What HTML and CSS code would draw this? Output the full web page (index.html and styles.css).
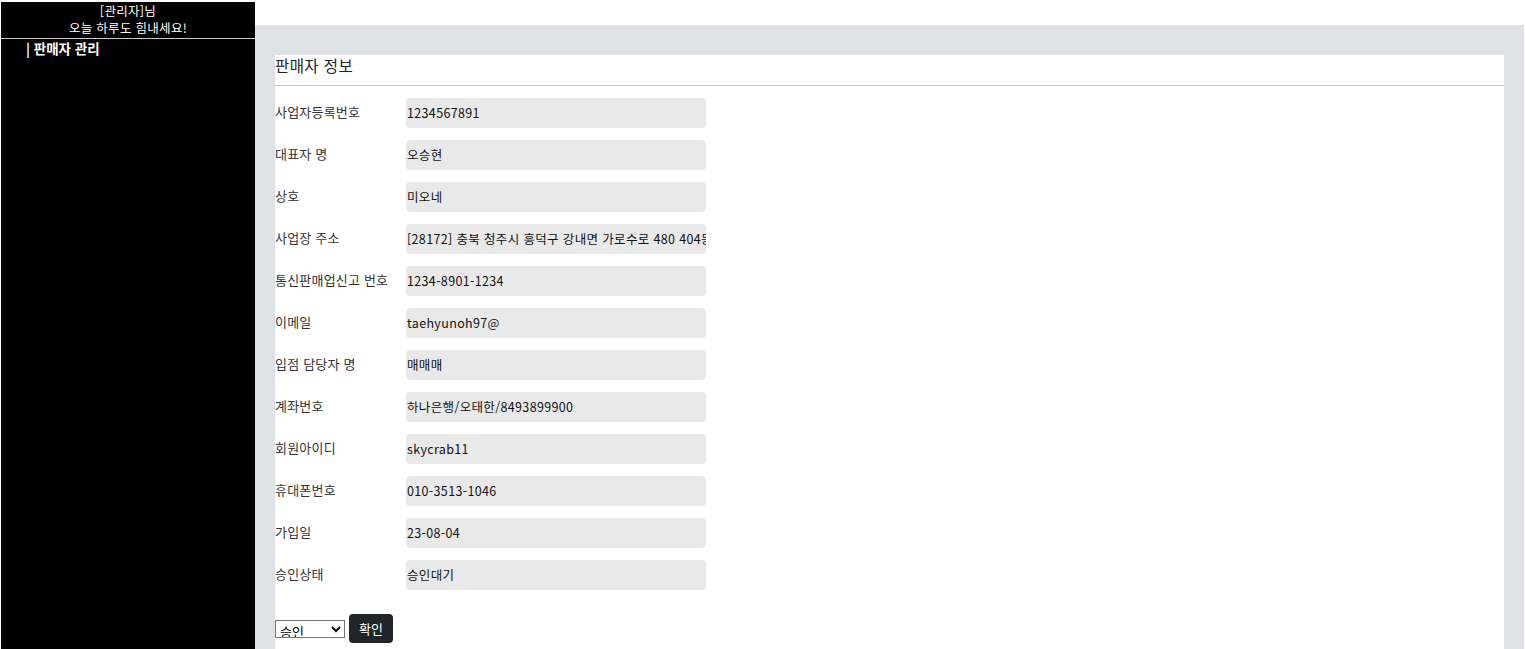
FILE: index.html
```html
<!DOCTYPE html>
<html lang="ko">
<head>
<meta charset="utf-8">
<title>판매자 정보</title>
<link rel="stylesheet" href="styles.css">
</head>
<body>
<div class="layout">
  <aside class="sidebar">
    <div class="profile">
      <div>[관리자]님</div>
      <div>오늘 하루도 힘내세요!</div>
    </div>
    <nav class="menu">
      <div class="menu-item">| 판매자 관리</div>
    </nav>
  </aside>
  <main class="main">
    <div class="topbar"></div>
    <div class="content">
      <section class="card">
        <h2 class="card-title">판매자 정보</h2>
        <div class="form">
          <div class="row"><label>사업자등록번호</label><div class="field">1234567891</div></div>
          <div class="row"><label>대표자 명</label><div class="field">오승현</div></div>
          <div class="row"><label>상호</label><div class="field">미오네</div></div>
          <div class="row"><label>사업장 주소</label><div class="field">[28172] 충북 청주시 흥덕구 강내면 가로수로 480 404동</div></div>
          <div class="row"><label>통신판매업신고 번호</label><div class="field">1234-8901-1234</div></div>
          <div class="row"><label>이메일</label><div class="field">taehyunoh97@</div></div>
          <div class="row"><label>입점 담당자 명</label><div class="field">매매매</div></div>
          <div class="row"><label>계좌번호</label><div class="field">하나은행/오태한/8493899900</div></div>
          <div class="row"><label>회원아이디</label><div class="field">skycrab11</div></div>
          <div class="row"><label>휴대폰번호</label><div class="field">010-3513-1046</div></div>
          <div class="row"><label>가입일</label><div class="field">23-08-04</div></div>
          <div class="row"><label>승인상태</label><div class="field">승인대기</div></div>
          <div class="actions">
            <select class="select"><option>승인</option><option>거절</option></select>
            <button class="btn">확인</button>
          </div>
        </div>
      </section>
    </div>
  </main>
</div>
</body>
</html>
```
FILE: styles.css
```css
html, body {
  margin: 0;
  padding: 0;
  height: 100%;
  background: #fff;
  font-family: "Noto Sans CJK KR", "Noto Sans", sans-serif;
  font-size: 13px;
  color: #222;
}
.layout {
  display: flex;
  min-height: 100vh;
}
.sidebar {
  width: 254px;
  margin: 2px 0 0 1px;
  background: #000;
  color: #fff;
  flex-shrink: 0;
}
.profile {
  text-align: center;
  font-size: 12.5px;
  letter-spacing: 0.3px;
  line-height: 17px;
  padding-bottom: 2px;
  border-bottom: 1px solid #c8c8c8;
}
.menu-item {
  padding-left: 25px;
  font-weight: bold;
  font-size: 13.5px;
  line-height: 19px;
}
.main {
  flex: 1;
  display: flex;
  flex-direction: column;
  margin-right: 1px;
}
.topbar {
  height: 25px;
  background: #fff;
}
.content {
  flex: 1;
  background: #dee2e6;
  padding: 30px 20px 0 20px;
}
.card {
  background: #fff;
  min-height: 620px;
}
.card-title {
  margin: 0;
  font-weight: normal;
  font-size: 15.5px;
  letter-spacing: 0.4px;
  line-height: 20px;
  padding: 0 0 10px 0;
  color: #222;
  border-bottom: 1px solid #c8c8c8;
}
.form {
  padding-top: 12px;
}
.row {
  display: flex;
  align-items: flex-start;
  margin-bottom: 12px;
}
.row label {
  width: 131px;
  flex-shrink: 0;
  line-height: 18px;
  padding-top: 5px;
  color: #333;
  letter-spacing: 0.2px;
}
.field {
  width: 300px;
  height: 30px;
  line-height: 30px;
  padding-left: 1px;
  background: #e9e9e9;
  border-radius: 4px;
  white-space: nowrap;
  overflow: hidden;
  font-size: 12.5px;
  letter-spacing: 0.35px;
  box-sizing: border-box;
  color: #111;
}
.actions {
  display: flex;
  align-items: center;
  gap: 4px;
  padding-top: 12px;
}
.select {
  width: 70px;
  height: 18px;
  font-family: inherit;
  font-size: 13px;
  border: 1px solid #767676;
  border-radius: 0;
  background: #fff;
  padding: 0;
}
.btn {
  background: #212529;
  color: #fff;
  border: none;
  border-radius: 4px;
  width: 44px;
  height: 29px;
  font-family: inherit;
  font-size: 13px;
  padding: 0;
}
```
